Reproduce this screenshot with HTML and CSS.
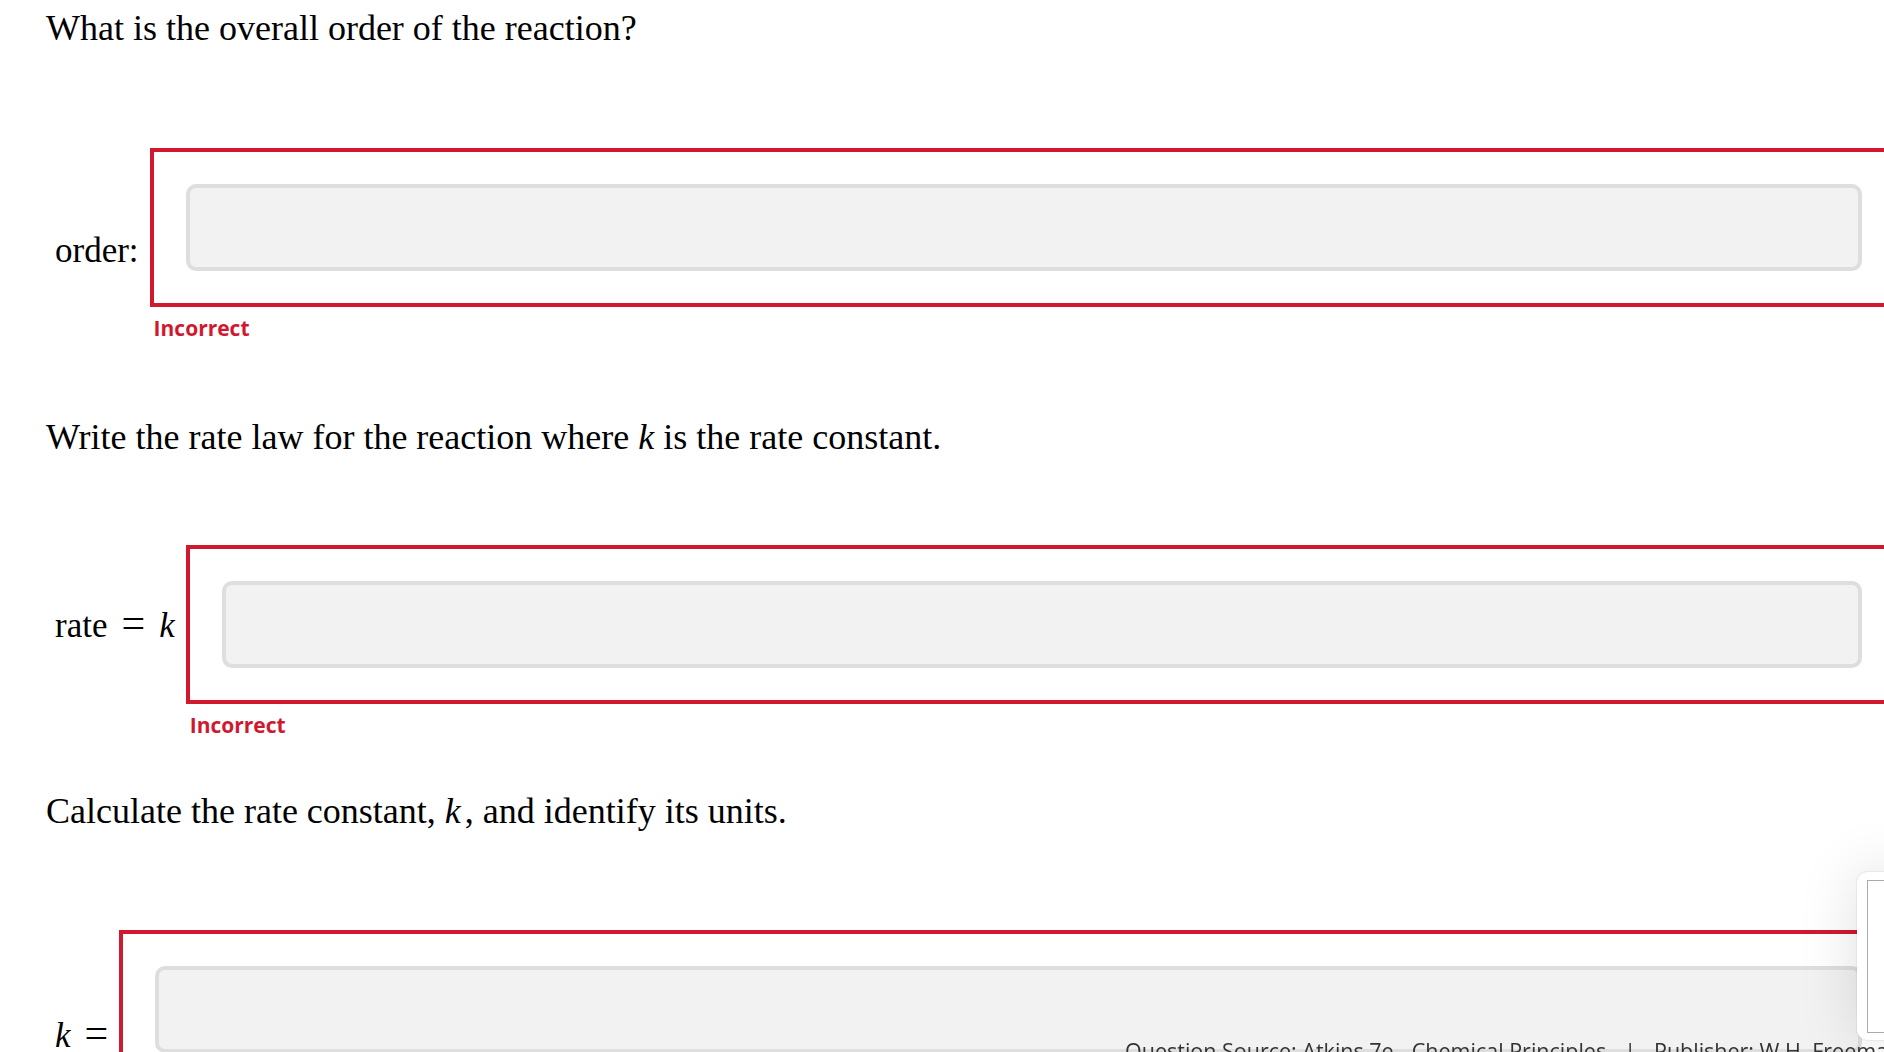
FILE: index.html
```html
<!DOCTYPE html>
<html lang="en">
<head>
  <meta charset="UTF-8">
  <meta name="viewport" content="width=device-width, initial-scale=1.0">
  <title>Reaction order</title>
  <link rel="stylesheet" href="styles.css">
</head>
<body>
  <div class="page">
    <p class="prompt">What is the overall order of the reaction?</p>
    <div class="answer-row row-order">
      <span class="answer-label label-order">order:</span>
      <div class="answer-col">
        <div class="answer-box"><input class="answer-input" type="text"></div>
        <p class="feedback">Incorrect</p>
      </div>
    </div>

    <p class="prompt prompt-rate">Write the rate law for the reaction where <i class="var">k</i> is the rate constant.</p>
    <div class="answer-row row-rate">
      <span class="answer-label label-rate">rate<span class="eq">=</span><i class="var">k</i></span>
      <div class="answer-col">
        <div class="answer-box"><input class="answer-input" type="text"></div>
        <p class="feedback">Incorrect</p>
      </div>
    </div>

    <p class="prompt prompt-k">Calculate the rate constant, <i class="var var-spaced">k</i>, and identify its units.</p>
    <div class="answer-row row-k">
      <span class="answer-label label-k"><i class="var">k</i><span class="eq">=</span></span>
      <div class="answer-col">
        <div class="answer-box"><input class="answer-input" type="text"></div>
      </div>
    </div>
  </div>

  <div class="side-panel"><div class="side-panel-frame"></div></div>

  <div class="source-bar">Question Source: Atkins 7e - Chemical Principles<span class="sep">|</span>Publisher: W.H. Freeman</div>
</body>
</html>
```

FILE: styles.css
```css
html, body{
  overflow: hidden;
}
body{
  margin: 0;
  background: #fff;
  color: #000;
  font-family: "Liberation Serif", "Times New Roman", serif;
}
.page{
  width: 1852px;
  padding-left: 46px;
  padding-top: 10px;
}
.prompt{
  margin: 0;
  font-size: 36px;
  line-height: 36px;
}
.prompt-rate{
  margin-top: 80px;
}
.prompt-k{
  margin-top: 57px;
}
.var{
  font-style: italic;
}
.var-spaced{
  margin-right: 4px;
}
.answer-row{
  display: flex;
  align-items: flex-start;
  padding-left: 9px;
}
.row-order{
  margin-top: 102px;
}
.row-rate{
  margin-top: 90px;
}
.row-k{
  margin-top: 101px;
}
.answer-label{
  flex: none;
  font-size: 35px;
  line-height: 35px;
  margin-right: 11px;
  white-space: nowrap;
}
.label-order{
  padding-top: 85px;
}
.label-rate{
  padding-top: 61px;
}
.label-k{
  padding-top: 86px;
}
.eq{
  font-size: 42px;
  padding: 0 14px;
}
.label-k .eq{
  padding-right: 0;
}
.answer-col{
  flex: 1;
  min-width: 0;
}
.answer-box{
  border: 4px solid #d0192e;
  padding: 32px;
}
.answer-input{
  display: block;
  width: 100%;
  height: 87px;
  box-sizing: border-box;
  margin: 0;
  border: 4px solid #dedede;
  border-radius: 10px;
  background: #f2f2f2;
  outline: none;
}
.feedback{
  margin: 11px 0 0;
  padding-left: 4px;
  font-family: "Open Sans", sans-serif;
  font-weight: 700;
  font-size: 21px;
  line-height: 21px;
  color: #d0192e;
}
.side-panel{
  position: fixed;
  left: 1857px;
  top: 872px;
  width: 60px;
  height: 168px;
  box-sizing: border-box;
  padding: 8px 0 0 10px;
  background: #fff;
  border-radius: 10px;
  box-shadow: 0 0 60px rgba(0,0,0,0.13), 0 0 2px rgba(0,0,0,0.2);
}
.side-panel-frame{
  height: 151px;
  border: 1px solid #aaa;
  border-right: 0;
}
.source-bar{
  position: fixed;
  left: 1125px;
  top: 1040px;
  font-family: "Open Sans", sans-serif;
  font-size: 21.5px;
  line-height: 21.5px;
  color: #333;
  white-space: nowrap;
}
.sep{
  margin: 0 18px;
}
```
